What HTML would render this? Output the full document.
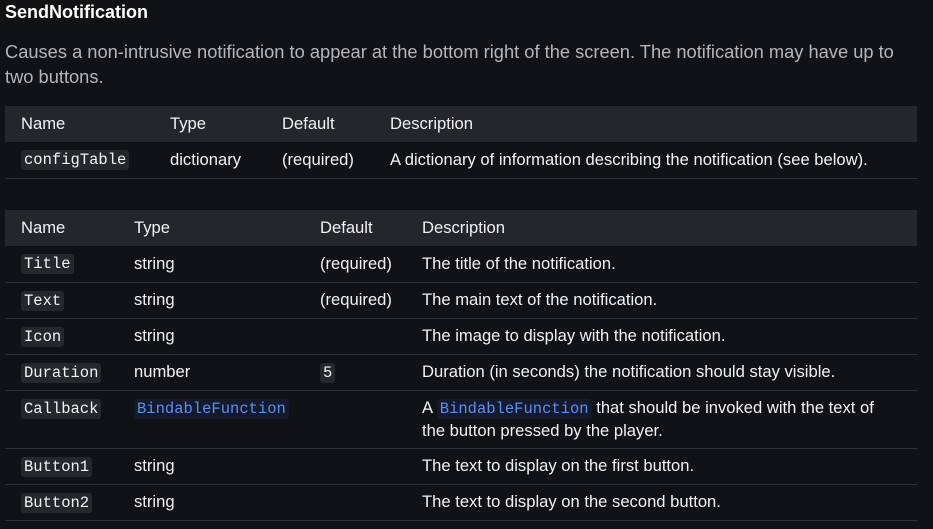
<!DOCTYPE html>
<html><head><meta charset="utf-8"><style>
*{margin:0;padding:0;box-sizing:border-box}
body{width:933px;height:529px;background:#111216;color:#f2f2f3;font-family:"Liberation Sans",sans-serif;font-size:16.6px;overflow:hidden;position:relative}
h3{position:absolute;left:5px;top:2px;font-size:18px;font-weight:bold;color:#fff}
p.d{position:absolute;left:5px;top:39px;width:916px;font-size:18.3px;line-height:25px;color:#b4b6bb}
table{position:absolute;left:5px;width:912px;border-collapse:collapse}
th{background:#25262b;text-align:left;font-weight:normal;height:36px;padding:0 0 0 16px;color:#f2f2f3}
td{height:36px;padding:0 0 0 16px;border-bottom:1px solid #2f3035;vertical-align:middle;line-height:22px}
code{font-family:"Liberation Mono",monospace;font-size:15.5px;background:#26272b;border-radius:3px;padding:1px 3px;position:relative;left:0}
code.b{color:#5b8ff0;background:#141a2b}
td.c{vertical-align:top;padding-top:6px;padding-bottom:6px}
</style></head><body>
<h3>SendNotification</h3>
<p class="d">Causes a non-intrusive notification to appear at the bottom right of the screen. The notification may have up to two buttons.</p>
<table style="top:106px">
<colgroup><col style="width:149px"><col style="width:112px"><col style="width:108px"><col></colgroup>
<tr><th>Name</th><th>Type</th><th>Default</th><th>Description</th></tr>
<tr style="height:35px"><td><code>configTable</code></td><td>dictionary</td><td>(required)</td><td>A dictionary of information describing the notification (see below).</td></tr>
</table>
<table style="top:210px">
<colgroup><col style="width:113px"><col style="width:186px"><col style="width:102px"><col></colgroup>
<tr><th>Name</th><th>Type</th><th>Default</th><th>Description</th></tr>
<tr><td><code>Title</code></td><td>string</td><td>(required)</td><td>The title of the notification.</td></tr>
<tr><td><code>Text</code></td><td>string</td><td>(required)</td><td>The main text of the notification.</td></tr>
<tr style="height:35px"><td><code>Icon</code></td><td>string</td><td></td><td>The image to display with the notification.</td></tr>
<tr><td><code>Duration</code></td><td>number</td><td><code>5</code></td><td>Duration (in seconds) the notification should stay visible.</td></tr>
<tr style="height:58px"><td class="c"><code>Callback</code></td><td class="c"><code class="b">BindableFunction</code></td><td class="c"></td><td class="c" style="padding-right:40px">A <code class="b">BindableFunction</code> that should be invoked with the text of the button pressed by the player.</td></tr>
<tr><td><code>Button1</code></td><td>string</td><td></td><td>The text to display on the first button.</td></tr>
<tr><td><code>Button2</code></td><td>string</td><td></td><td>The text to display on the second button.</td></tr>
</table>
</body></html>
